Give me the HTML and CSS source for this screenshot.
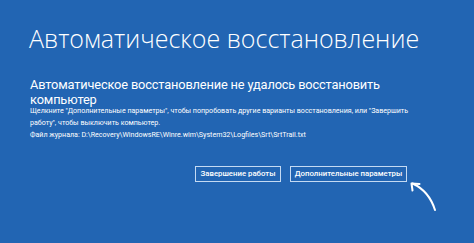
FILE: index.html
```html
<!DOCTYPE html>
<html>

<head>
    <title>Автоматическое восстановление</title>
    <meta charset="utf-8">
    <link rel="stylesheet" href="styles.css">
</head>

<body>
    <div class="screen">
        <h1 class="title">Автоматическое восстановление</h1>
        <div class="content">
            <h2 class="subtitle">Автоматическое восстановление не удалось восстановить<br>компьютер</h2>
            <p class="hint">Щелкните "Дополнительные параметры", чтобы попробовать другие варианты восстановления, или "Завершить<br>работу", чтобы выключить компьютер.</p>
            <p class="hint">Файл журнала: D:\Recovery\WindowsRE\Winre.wim\System32\Logfiles\Srt\SrtTrail.txt</p>
        </div>
        <div class="actions">
            <button class="btn">Завершение работы</button>
            <button class="btn">Дополнительные параметры</button>
        </div>
    </div>

    <!-- стрелка поверх экрана -->
    <svg class="arrow" width="474" height="243" viewBox="0 0 474 243">
        <path d="M435 210 Q429 191 412.5 183.5" fill="none" stroke="#fff" stroke-width="2" stroke-linecap="round"/>
        <path d="M412.5 190.5 L411.5 183.5 L419.5 184" fill="none" stroke="#fff" stroke-width="2" stroke-linecap="round" stroke-linejoin="round"/>
    </svg>
</body>

</html>
```

FILE: styles.css
```css
* {
    margin: 0;
    padding: 0;
    box-sizing: border-box;
}

html,
body {
    width: 474px;
    height: 243px;
    overflow: hidden;
}

body {
    background: #2265b3;
    color: #fff;
    font-family: Roboto, "Open Sans", sans-serif;
    position: relative;
}

.screen {
    width: 407px;
    padding: 22px 0 0 30px;
}

.title {
    font-family: "Open Sans", "Noto Sans", sans-serif;
    font-size: 25px;
    font-weight: 300;
    line-height: 32px;
    white-space: nowrap;
    margin-left: -1px;
}

.content {
    margin-top: 23px;
}

.subtitle {
    font-size: 12.8px;
    font-weight: 400;
    line-height: 15px;
    letter-spacing: -0.15px;
    white-space: nowrap;
    margin-bottom: -2px;
}

.hint {
    font-size: 7.1px;
    line-height: 12.2px;
    white-space: nowrap;
}

.actions {
    display: flex;
    justify-content: flex-end;
    gap: 9px;
    margin-top: 24px;
}

.btn {
    background: transparent;
    border: 1px solid #c4daf3;
    color: #fff;
    font-family: Roboto, "Open Sans", sans-serif;
    font-size: 7.8px;
    font-weight: 500;
    white-space: nowrap;
    height: 16px;
    padding: 0;
}

.btn:first-child {
    width: 86px;
}

.btn:last-child {
    width: 117px;
}

.arrow {
    position: absolute;
    left: 0;
    top: 0;
}
```
